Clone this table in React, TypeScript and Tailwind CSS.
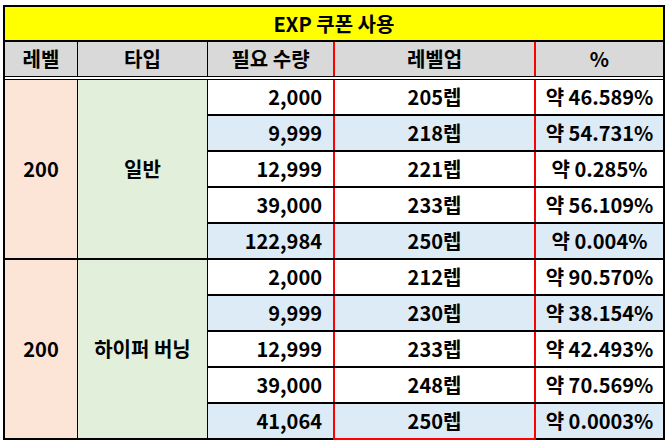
const font = { fontFamily: '"Noto Sans CJK KR", "Noto Sans", sans-serif' };

type Row = { need: string; level: string; pct: string; blue: boolean };

const groups: { lv: string; type: string; rows: Row[] }[] = [
  {
    lv: "200",
    type: "일반",
    rows: [
      { need: "2,000", level: "205렙", pct: "약 46.589%", blue: false },
      { need: "9,999", level: "218렙", pct: "약 54.731%", blue: true },
      { need: "12,999", level: "221렙", pct: "약 0.285%", blue: false },
      { need: "39,000", level: "233렙", pct: "약 56.109%", blue: false },
      { need: "122,984", level: "250렙", pct: "약 0.004%", blue: true },
    ],
  },
  {
    lv: "200",
    type: "하이퍼 버닝",
    rows: [
      { need: "2,000", level: "212렙", pct: "약 90.570%", blue: false },
      { need: "9,999", level: "230렙", pct: "약 38.154%", blue: true },
      { need: "12,999", level: "233렙", pct: "약 42.493%", blue: false },
      { need: "39,000", level: "248렙", pct: "약 70.569%", blue: false },
      { need: "41,064", level: "250렙", pct: "약 0.0003%", blue: true },
    ],
  },
];

function Group({ lv, type, rows, last }: { lv: string; type: string; rows: Row[]; last: boolean }) {
  return (
    <div className={`flex ${last ? "" : "border-b-2 border-black"}`}>
      <div className="w-[73px] border-r border-black bg-[#FCE4D6] flex items-center justify-center">
        {lv}
      </div>
      <div className="w-[130px] border-r border-black bg-[#E2EFDA] flex items-center justify-center">
        {type}
      </div>
      <div className="flex flex-col">
        {rows.map((r, i) => {
          const end = i === rows.length - 1;
          const bg = r.blue ? "bg-[#DDEBF7]" : "bg-white";
          return (
            <div key={i} className={`flex ${end ? "h-[34px]" : "h-[36px] border-b-2 border-black"} ${bg}`}>
              <div className="w-[125px] flex items-center justify-end pr-[11px]">{r.need}</div>
              <div
                className={`w-[203px] border-x-2 border-[#FF0000] flex items-center justify-center ${
                  end && last ? "relative -mb-[2px] border-b-2" : ""
                }`}
              >
                {r.level}
              </div>
              <div className="w-[127px] flex items-center justify-center">{r.pct}</div>
            </div>
          );
        })}
      </div>
    </div>
  );
}

export default function App() {
  return (
    <div className="min-h-screen bg-white pt-[5px] pl-[3px]" style={font}>
      <div className="w-[662px] border-2 border-black text-[20px] font-bold leading-none text-black">
        <div className="h-[35px] bg-[#FFFF00] border-b-2 border-black flex items-center justify-center">
          EXP 쿠폰 사용
        </div>
        <div className="flex h-[34px] bg-[#D9D9D9]">
          <div className="w-[73px] border-r border-black flex items-center justify-center">레벨</div>
          <div className="w-[130px] border-r border-black flex items-center justify-center">타입</div>
          <div className="w-[125px] flex items-center justify-center">필요 수량</div>
          <div className="w-[203px] border-x-2 border-[#FF0000] flex items-center justify-center">레벨업</div>
          <div className="w-[127px] flex items-center justify-center">%</div>
        </div>
        <div className="h-px bg-black" />
        <div className="h-[2px] bg-white" />
        <div className="h-px bg-black" />
        {groups.map((g, i) => (
          <Group key={i} {...g} last={i === groups.length - 1} />
        ))}
      </div>
    </div>
  );
}
